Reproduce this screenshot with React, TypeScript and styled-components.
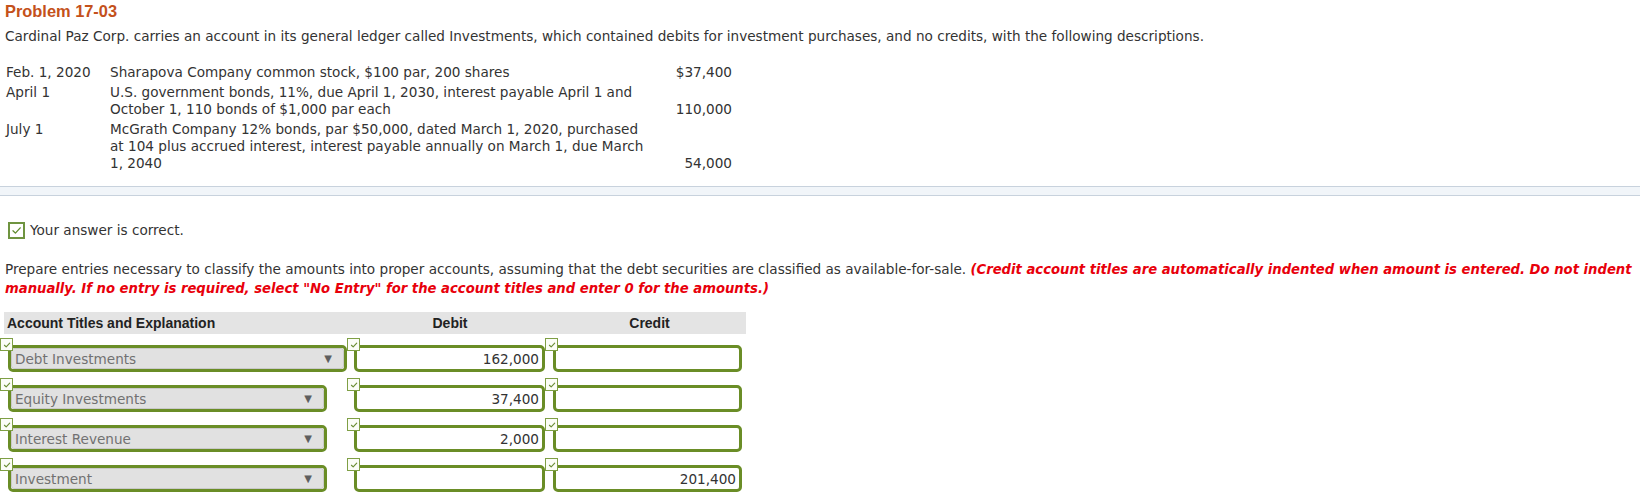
import React from "react";
import styled, { createGlobalStyle } from "styled-components";

const GREEN = "#6a8d26";

const Global = createGlobalStyle`
  html, body { margin: 0; padding: 0; background: #fff; }
  body { font-family: "DejaVu Sans", Verdana, sans-serif; font-size: 13.6px; color: #333; }
`;

const Page = styled.div`
  padding: 0 0 0 5px;
  width: 1640px;
  box-sizing: border-box;
`;

const Title = styled.h1`
  margin: 0;
  padding-top: 2px;
  font-family: "Liberation Sans", Tahoma, sans-serif;
  font-weight: bold;
  font-size: 16.4px;
  line-height: 18px;
  color: #c4511b;
`;

const Intro = styled.p`
  margin: 8px 0 0;
  line-height: 17px;
`;

const InvTable = styled.table`
  margin-top: 18px;
  margin-left: 1px;
  border-collapse: collapse;
  line-height: 17px;
`;

const Cell = styled.td<{ $w?: number; $align?: "left" | "right"; $valign?: "top" | "bottom" }>`
  padding: 1px 0 2px;
  vertical-align: ${(p) => p.$valign ?? "top"};
  text-align: ${(p) => p.$align ?? "left"};
  width: ${(p) => (p.$w ? `${p.$w}px` : "auto")};
  white-space: nowrap;
`;

const Divider = styled.div`
  margin: 12px 0 0 -5px;
  height: 8px;
  border-top: 1px solid #c8d2dd;
  border-bottom: 1px solid #c8d2dd;
  background: #f1f5f9;
`;

const Status = styled.div`
  display: flex;
  align-items: center;
  gap: 5px;
  margin: 26px 0 0 3px;
  line-height: 17px;
`;

const BigBox = styled.span`
  width: 13px;
  height: 13px;
  border: 2px solid #6f9440;
  background: #fff;
  display: inline-flex;
  align-items: center;
  justify-content: center;
`;

const Instructions = styled.p`
  margin: 21px 0 0;
  line-height: 18px;
`;

const Red = styled.span`
  color: #e8000b;
  font-weight: bold;
  font-style: italic;
  font-size: 13.2px;
  line-height: 18px;
`;

const Journal = styled.div`
  margin: 14px 0 0 -5px;
  width: 750px;
`;

const HeadRow = styled.div`
  margin-left: 4px;
  width: 742px;
  display: grid;
  grid-template-columns: 343px 198px 201px;
  height: 22px;
  align-items: center;
  background: #e4e4e4;
  font-family: "Liberation Sans", Tahoma, sans-serif;
  font-weight: bold;
  font-size: 14px;
  color: #222;
`;

const HeadCell = styled.div<{ $center?: boolean }>`
  padding-left: ${(p) => (p.$center ? "8px" : "3px")};
  text-align: ${(p) => (p.$center ? "center" : "left")};
`;

const Row = styled.div`
  display: grid;
  grid-template-columns: 347px 198px 202px;
  margin-top: 4px;
  & + & { margin-top: 6px; }
`;

const FieldCell = styled.div<{ $pad: number }>`
  position: relative;
  padding: 7px 0 0 ${(p) => p.$pad}px;
`;

const MiniBox = styled.span`
  position: absolute;
  left: 0;
  top: 0;
  width: 11px;
  height: 11px;
  border: 1px solid #7f9f45;
  background: #fbfdf7;
  display: flex;
  align-items: center;
  justify-content: center;
  z-index: 1;
`;

const SelectShell = styled.div<{ $w: number }>`
  width: ${(p) => p.$w}px;
  height: 27px;
  box-sizing: border-box;
  border: 3px solid ${GREEN};
  border-radius: 5px;
  background: #fff;
`;

const SelectFace = styled.div`
  height: 100%;
  box-sizing: border-box;
  background: #e1e1e1;
  border: 1px solid #c9c9c9;
  border-radius: 3px;
  display: flex;
  align-items: center;
  justify-content: space-between;
  padding: 0 11px 0 3px;
  color: #717171;
`;

const Arrow = styled.span`
  font-size: 10px;
  color: #5e5e5e;
`;

const AmountBox = styled.div<{ $w: number }>`
  width: ${(p) => p.$w}px;
  height: 27px;
  box-sizing: border-box;
  border: 3px solid ${GREEN};
  border-radius: 5px;
  background: #fff;
  display: flex;
  align-items: center;
  justify-content: flex-end;
  padding-right: 3px;
  color: #333;
`;

const Tick = ({ size = 8, stroke = "#6b8e34", w = 1.4 }: { size?: number; stroke?: string; w?: number }) => (
  <svg width={size} height={size} viewBox="0 0 10 10">
    <path d="M1.8 5.3 L4 7.4 L8.4 2.6" fill="none" stroke={stroke} strokeWidth={w} strokeLinecap="round" strokeLinejoin="round" />
  </svg>
);

const investments = [
  { date: "Feb. 1, 2020", lines: ["Sharapova Company common stock, $100 par, 200 shares"], amount: "$37,400" },
  {
    date: "April 1",
    lines: ["U.S. government bonds, 11%, due April 1, 2030, interest payable April 1 and", "October 1, 110 bonds of $1,000 par each"],
    amount: "110,000",
  },
  {
    date: "July 1",
    lines: [
      "McGrath Company 12% bonds, par $50,000, dated March 1, 2020, purchased",
      "at 104 plus accrued interest, interest payable annually on March 1, due March",
      "1, 2040",
    ],
    amount: "54,000",
  },
];

const entries = [
  { account: "Debt Investments", selW: 339, debit: "162,000", credit: "" },
  { account: "Equity Investments", selW: 319, debit: "37,400", credit: "" },
  { account: "Interest Revenue", selW: 319, debit: "2,000", credit: "" },
  { account: "Investment", selW: 319, debit: "", credit: "201,400" },
];

export default function App() {
  return (
    <Page>
      <Global />
      <Title>Problem 17-03</Title>
      <Intro>
        Cardinal Paz Corp. carries an account in its general ledger called Investments, which contained debits for
        investment purchases, and no credits, with the following descriptions.
      </Intro>
      <InvTable>
        <tbody>
          {investments.map((r) => (
            <tr key={r.date}>
              <Cell $w={104}>{r.date}</Cell>
              <Cell $w={560}>
                {r.lines.map((l, i) => (
                  <React.Fragment key={i}>
                    {i > 0 && <br />}
                    {l}
                  </React.Fragment>
                ))}
              </Cell>
              <Cell $w={62} $align="right" $valign="bottom">
                {r.amount}
              </Cell>
            </tr>
          ))}
        </tbody>
      </InvTable>
      <Divider />
      <Status>
        <BigBox>
          <Tick size={11} stroke="#5f8a2c" w={1.2} />
        </BigBox>
        Your answer is correct.
      </Status>
      <Instructions>
        Prepare entries necessary to classify the amounts into proper accounts, assuming that the debt securities are
        classified as available-for-sale.{" "}
        <Red>
          (Credit account titles are automatically indented when amount is entered. Do not indent manually. If no entry
          is required, select "No Entry" for the account titles and enter 0 for the amounts.)
        </Red>
      </Instructions>
      <Journal>
        <HeadRow>
          <HeadCell>Account Titles and Explanation</HeadCell>
          <HeadCell $center>Debit</HeadCell>
          <HeadCell $center>Credit</HeadCell>
        </HeadRow>
        {entries.map((e) => (
          <Row key={e.account}>
            <FieldCell $pad={8}>
              <MiniBox>
                <Tick />
              </MiniBox>
              <SelectShell $w={e.selW}>
                <SelectFace>
                  {e.account}
                  <Arrow>▼</Arrow>
                </SelectFace>
              </SelectShell>
            </FieldCell>
            <FieldCell $pad={7}>
              <MiniBox>
                <Tick />
              </MiniBox>
              <AmountBox $w={191}>{e.debit}</AmountBox>
            </FieldCell>
            <FieldCell $pad={8}>
              <MiniBox>
                <Tick />
              </MiniBox>
              <AmountBox $w={189}>{e.credit}</AmountBox>
            </FieldCell>
          </Row>
        ))}
      </Journal>
    </Page>
  );
}
